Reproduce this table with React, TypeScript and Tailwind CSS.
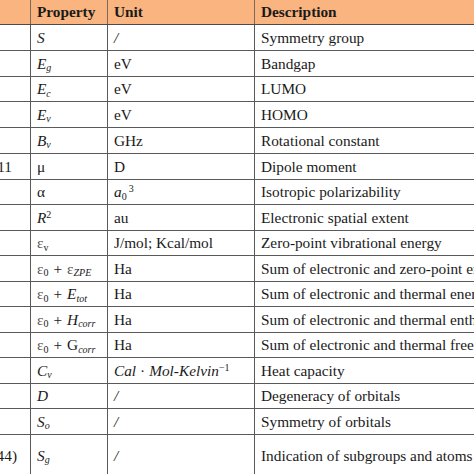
import React from 'react';

type Row = {
  h: string;
  left?: React.ReactNode;
  leftPad?: string;
  prop: React.ReactNode;
  unit: React.ReactNode;
  desc: string;
};

const Eps = ({ children }: { children?: React.ReactNode }) => (
  <span className="text-[#555]">ε{children}</span>
);

const Sub = ({ children, italic = true }: { children: React.ReactNode; italic?: boolean }) => (
  <sub className={`text-[10px] ${italic ? 'italic' : 'not-italic'}`}>{children}</sub>
);

const eps0 = (
  <>
    <Eps />
    <Sub italic={false}>0</Sub>
    <span className="mx-[5px]">+</span>
  </>
);

const rows: Row[] = [
  { h: 'h-[26px]', prop: <i>S</i>, unit: <i>/</i>, desc: 'Symmetry group' },
  { h: 'h-[26px]', prop: <><i>E</i><Sub>g</Sub></>, unit: 'eV', desc: 'Bandgap' },
  { h: 'h-[25px]', prop: <><i>E</i><Sub>c</Sub></>, unit: 'eV', desc: 'LUMO' },
  { h: 'h-[26px]', prop: <><i>E</i><Sub>v</Sub></>, unit: 'eV', desc: 'HOMO' },
  { h: 'h-[26px]', prop: <><i>B</i><Sub>v</Sub></>, unit: 'GHz', desc: 'Rotational constant' },
  { h: 'h-[26px]', left: '11', leftPad: 'pr-[18px]', prop: 'μ', unit: 'D', desc: 'Dipole moment' },
  {
    h: 'h-[25px]',
    prop: 'α',
    unit: <><i>a</i><Sub italic={false}>0</Sub><sup className="text-[10px] ml-[2px]">3</sup></>,
    desc: 'Isotropic polarizability',
  },
  { h: 'h-[26px]', prop: <><i>R</i><sup className="text-[10px]">2</sup></>, unit: 'au', desc: 'Electronic spatial extent' },
  { h: 'h-[25px]', prop: <><Eps /><Sub italic={false}>v</Sub></>, unit: 'J/mol; Kcal/mol', desc: 'Zero-point vibrational energy' },
  {
    h: 'h-[26px]',
    prop: <>{eps0}<Eps /><Sub>ZPE</Sub></>,
    unit: 'Ha',
    desc: 'Sum of electronic and zero-point energies',
  },
  {
    h: 'h-[25px]',
    prop: <>{eps0}<i>E</i><Sub>tot</Sub></>,
    unit: 'Ha',
    desc: 'Sum of electronic and thermal energies',
  },
  {
    h: 'h-[26px]',
    prop: <>{eps0}<i>H</i><Sub>corr</Sub></>,
    unit: 'Ha',
    desc: 'Sum of electronic and thermal enthalpies',
  },
  {
    h: 'h-[25px]',
    prop: <>{eps0}G<Sub>corr</Sub></>,
    unit: 'Ha',
    desc: 'Sum of electronic and thermal free energies',
  },
  {
    h: 'h-[26px]',
    prop: <><i>C</i><Sub>v</Sub></>,
    unit: (
      <i>
        Cal<span className="mx-[4px] not-italic">·</span>Mol-Kelvin
        <sup className="text-[10px] not-italic">−1</sup>
      </i>
    ),
    desc: 'Heat capacity',
  },
  { h: 'h-[25px]', prop: <i>D</i>, unit: <i>/</i>, desc: 'Degeneracy of orbitals' },
  { h: 'h-[26px]', prop: <><i>S</i><Sub>o</Sub></>, unit: <i>/</i>, desc: 'Symmetry of orbitals' },
  {
    h: 'h-[42px]',
    left: '44)',
    leftPad: 'pr-[13px]',
    prop: <><i>S</i><Sub>g</Sub></>,
    unit: <i>/</i>,
    desc: 'Indication of subgroups and atoms in the molecule',
  },
];

export default function App() {
  return (
    <div
      className="w-[474px] h-[474px] overflow-hidden bg-white text-[#1a1a1a] text-[15.3px] leading-none"
      style={{ fontFamily: '"Liberation Serif", "Times New Roman", serif' }}
    >
      <div className="flex h-[25px] bg-[#f9b47f] border-b border-[#4a4a4a] font-bold">
        <div className="w-[31px] shrink-0 border-r border-[#7a6a5e]" />
        <div className="w-[77px] shrink-0 border-r border-[#7a6a5e] flex items-center pl-[6px]">Property</div>
        <div className="w-[147px] shrink-0 border-r border-[#7a6a5e] flex items-center pl-[6px]">Unit</div>
        <div className="flex-1 flex items-center pl-[6px] whitespace-nowrap">Description</div>
      </div>
      {rows.map((r, i) => (
        <div key={i} className={`flex ${r.h} shrink-0 border-b border-[#5a5a5a]`}>
          <div className={`w-[31px] shrink-0 border-r border-[#5a5a5a] flex items-center justify-end overflow-hidden ${r.leftPad ?? ''}`}>
            {r.left && <span className="whitespace-nowrap">{r.left}</span>}
          </div>
          <div className="w-[77px] shrink-0 border-r border-[#5a5a5a] flex items-center pl-[6px] whitespace-nowrap">
            <span>{r.prop}</span>
          </div>
          <div className="w-[147px] shrink-0 border-r border-[#5a5a5a] flex items-center pl-[6px] whitespace-nowrap">
            <span>{r.unit}</span>
          </div>
          <div className="flex-1 min-w-0 flex items-center pl-[6px] whitespace-nowrap overflow-hidden">
            {r.desc}
          </div>
        </div>
      ))}
    </div>
  );
}
